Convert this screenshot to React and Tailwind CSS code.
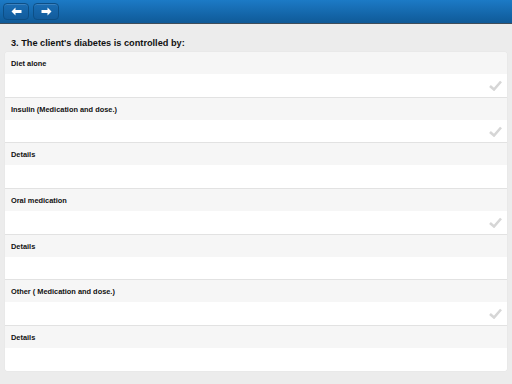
import React from 'react'

const rows = [
  { label: 'Diet alone', check: true },
  { label: 'Insulin (Medication and dose.)', check: true },
  { label: 'Details', check: false },
  { label: 'Oral medication', check: true },
  { label: 'Details', check: false },
  { label: 'Other ( Medication and dose.)', check: true },
  { label: 'Details', check: false },
]

function Check() {
  return (
    <svg width="13" height="11" viewBox="0 0 13 11" className="text-[#d6d6d6]">
      <path d="M1 6 L5 9.5 L12 1.5" fill="none" stroke="currentColor" strokeWidth="2.6" strokeLinejoin="miter" />
    </svg>
  )
}

function NavButton({ dir }) {
  return (
    <button className="w-[26px] h-[17px] rounded-[4px] border border-[#0d4f86] bg-gradient-to-b from-[#1a6db4] to-[#125c9c] flex items-center justify-center shadow-[inset_0_1px_0_rgba(255,255,255,0.15)]">
      <svg width="11" height="9" viewBox="0 0 11 9">
        {dir === 'left' ? (
          <path d="M0.5 4.5 L4.5 0.5 L4.5 3 L10.5 3 L10.5 6 L4.5 6 L4.5 8.5 Z" fill="white" />
        ) : (
          <path d="M10.5 4.5 L6.5 0.5 L6.5 3 L0.5 3 L0.5 6 L6.5 6 L6.5 8.5 Z" fill="white" />
        )}
      </svg>
    </button>
  )
}

export default function App() {
  return (
    <div className="w-[512px] h-[384px] bg-[#ececec] flex flex-col overflow-hidden" style={{ fontFamily: '"Liberation Sans", Arial, sans-serif' }}>
      <div className="h-[24px] shrink-0 bg-gradient-to-b from-[#1c7ac6] to-[#0f5a98] border-b border-[#3f4d5a] flex items-center gap-[4px] px-[3px]">
        <NavButton dir="left" />
        <NavButton dir="right" />
      </div>
      <div className="px-[5px] pt-[13px]">
        <h1 className="text-[9.2px] leading-[12px] font-bold text-[#111] pl-[6px] mb-[3px]">3. The client's diabetes is controlled by:</h1>
        <div className="bg-white rounded-[3px] overflow-hidden shadow-[0_0_1px_rgba(0,0,0,0.15)]">
          {rows.map((r, i) => (
            <div key={i} className={i < rows.length - 1 ? 'border-b border-[#e2e2e2]' : ''}>
              <div className="h-[22px] bg-[#f6f6f6] flex items-center pt-[1px] px-[6px] text-[7.4px] font-bold text-[#111]">{r.label}</div>
              <div className="h-[22.7px] bg-white flex items-center justify-end pr-[5px]">
                {r.check && <Check />}
              </div>
            </div>
          ))}
        </div>
      </div>
    </div>
  )
}
